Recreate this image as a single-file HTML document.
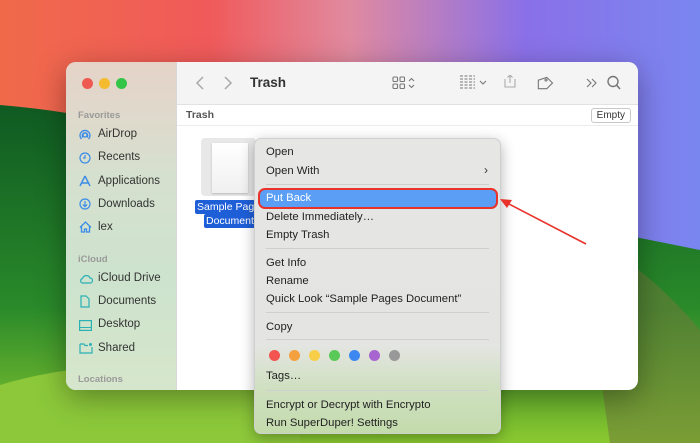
<!DOCTYPE html>
<html><head><style>
*{margin:0;padding:0;box-sizing:border-box}
body{width:700px;height:443px;overflow:hidden;position:relative;font-family:"Liberation Sans",sans-serif;background:#3a8a2a}
.bg{position:absolute;left:0;top:0}
.win{position:absolute;left:66px;top:62px;width:572px;height:328px;border-radius:10px;overflow:hidden;background:#fff;box-shadow:0 8px 30px rgba(0,0,0,.35)}
.side{position:absolute;left:0;top:0;width:111px;height:328px;background:linear-gradient(#e6d3c8 0%,#d6e0cf 35%,#cde3cd 65%,#d6e6cc 100%);border-right:1px solid #d8d8d8}
.tl{position:absolute;top:16px;width:11px;height:11px;border-radius:50%}
.sh{position:absolute;left:12px;font-size:9.5px;color:#9a9a9a;font-weight:bold}
.si{position:absolute;left:32px;font-size:11.5px;color:#333}
.ic{position:absolute;left:13px}
.tb{position:absolute;left:111px;top:0;right:0;height:43px;background:#f4f4f4;border-bottom:1px solid #e2e2e2}
.pb{position:absolute;left:111px;top:43px;right:0;height:21px;background:#fff;border-bottom:1px solid #ececec;font-size:10.5px;color:#555}
.menu{position:absolute;left:254px;top:138px;width:247px;height:296px;border-radius:7px;background:linear-gradient(#e6e6e4 0%,#e4e5e2 70%,#cfe0c0 85%,#c3dbac 100%);box-shadow:0 4px 14px rgba(0,0,0,.3);border:1px solid #cfcfcf}
.mi{position:absolute;left:11px;font-size:11.3px;color:#222}
.sep{position:absolute;left:11px;right:11px;height:1px;background:#cfcfcf}
.dot{position:absolute;top:211px;width:11px;height:11px;border-radius:50%}
</style></head><body>
<svg class="bg" width="700" height="443">
<defs>
<linearGradient id="t" x1="0" y1="0" x2="1" y2="0"><stop offset="0" stop-color="#f06a4a"/><stop offset=".3" stop-color="#f05a5a"/><stop offset=".5" stop-color="#e08aa0"/><stop offset=".75" stop-color="#8a70e8"/><stop offset="1" stop-color="#7a86f0"/></linearGradient>
<linearGradient id="g" x1="0" y1="0" x2="0" y2="1"><stop offset="0" stop-color="#0f5a22"/><stop offset=".6" stop-color="#2a8a2a"/><stop offset="1" stop-color="#8ac830"/></linearGradient>
</defs>
<rect width="700" height="443" fill="url(#t)"/>
<path d="M0 105 Q120 115 200 150 L700 250 L700 443 L0 443Z" fill="url(#g)"/>
<path d="M580 230 Q650 270 700 330 L700 443 L610 443Z" fill="#6f7a3a" opacity=".55"/>
<path d="M0 443 L0 385 Q150 340 300 405 L300 443Z" fill="#8cc83a"/>
</svg>
<div class="win">
 <div class="side">
  <div class="tl" style="left:16px;background:#ee5a52"></div>
  <div class="tl" style="left:33px;background:#f4bb2e"></div>
  <div class="tl" style="left:50px;background:#33c548"></div>
  <div class="sh" style="top:48px">Favorites</div>
  <svg class="ic" style="top:67px" width="12" height="12"><g fill="none" stroke="#3b8ce8" stroke-width="1.3"><circle cx="6" cy="6" r="2"/><path d="M2.5 10A5 5 0 1 1 9.5 10M4 8.5A2.8 2.8 0 1 1 8 8.5"/></g></svg>
  <div class="si" style="top:66px">AirDrop</div>
  <svg class="ic" style="top:90px" width="12" height="12"><circle cx="6" cy="6" r="5" fill="none" stroke="#3b8ce8" stroke-width="1.2"/><path d="M6 3V6H4" fill="none" stroke="#3b8ce8" stroke-width="1.2"/></svg>
  <div class="si" style="top:89px">Recents</div>
  <svg class="ic" style="top:113px" width="12" height="12"><path d="M6 1L11 11M6 1L1 11M2 8H10" fill="none" stroke="#3b8ce8" stroke-width="1.4"/></svg>
  <div class="si" style="top:113px">Applications</div>
  <svg class="ic" style="top:136px" width="12" height="12"><circle cx="6" cy="6" r="5" fill="none" stroke="#3b8ce8" stroke-width="1.2"/><path d="M6 3V8.5M3.8 6.5L6 8.7 8.2 6.5" fill="none" stroke="#3b8ce8" stroke-width="1.2"/></svg>
  <div class="si" style="top:136px">Downloads</div>
  <svg class="ic" style="top:159px" width="13" height="12"><path d="M1 6.5L6.5 1 12 6.5M2.5 5V11H5.5V8H7.5V11H10.5V5" fill="none" stroke="#3b8ce8" stroke-width="1.3"/></svg>
  <div class="si" style="top:159px">lex</div>
  <div class="sh" style="top:192px">iCloud</div>
  <svg class="ic" style="top:211px" width="14" height="11"><path d="M3.5 10H11A2.5 2.5 0 0 0 11 5 4 4 0 0 0 3.5 5.5 2.3 2.3 0 0 0 3.5 10Z" fill="none" stroke="#2ab0b5" stroke-width="1.2"/></svg>
  <div class="si" style="top:210px">iCloud Drive</div>
  <svg class="ic" style="top:233px" width="12" height="13"><path d="M2 1H7L10 4V12H2Z" fill="none" stroke="#2ab0b5" stroke-width="1.2"/></svg>
  <div class="si" style="top:233px">Documents</div>
  <svg class="ic" style="top:258px" width="13" height="11"><rect x=".6" y=".6" width="11.8" height="9.8" fill="none" stroke="#2ab0b5" stroke-width="1.2"/><path d="M1 7.5H12" stroke="#2ab0b5"/></svg>
  <div class="si" style="top:256px">Desktop</div>
  <svg class="ic" style="top:280px" width="14" height="12"><path d="M1 2H5L6 3.5H9M1 2V11H13V5" fill="none" stroke="#2ab0b5" stroke-width="1.2"/><circle cx="11.5" cy="2.5" r="1.5" fill="#2ab0b5"/></svg>
  <div class="si" style="top:280px">Shared</div>
  <div class="sh" style="top:312px">Locations</div>
 </div>
 <div class="tb">
  <svg style="position:absolute;left:18px;top:13px" width="40" height="16"><path d="M8 2L2 8 8 14M30 2L36 8 30 14" fill="none" stroke="#a8a8a8" stroke-width="1.5"/></svg>
  <div style="position:absolute;left:73px;top:13px;font-size:13.5px;font-weight:bold;color:#333">Trash</div>
  <svg style="position:absolute;left:215px;top:13px" width="330" height="18" fill="none" stroke="#777" stroke-width="1.1">
   <rect x="1" y="2" width="4.5" height="4.5" rx="1"/><rect x="8" y="2" width="4.5" height="4.5" rx="1"/><rect x="1" y="9" width="4.5" height="4.5" rx="1"/><rect x="8" y="9" width="4.5" height="4.5" rx="1"/>
   <path d="M17 6L19.5 3.5 22 6M17 10L19.5 12.5 22 10"/>
   <path d="M68 1H83M68 4H83M68 7H83M68 10H83M68 13H83" stroke-dasharray="3 1.5"/>
   <path d="M88 6L91 9 94 6"/>
   <path d="M113 4V12H123V4M118 0V8M115.5 2.5L118 0 120.5 2.5" stroke="#aaa"/>
   <path d="M150 2H158V10L152 16 146 10Z" transform="rotate(45 152 8)"/>
   <circle cx="154" cy="5" r="1"/>
   <path d="M195 4L199 8 195 12M200 4L204 8 200 12"/>
   <circle cx="221" cy="6.5" r="5" stroke-width="1.4"/><path d="M224.5 10L228 14" stroke-width="1.6"/>
  </svg>
 </div>
 <div class="pb"><span style="position:absolute;left:9px;top:4px;font-weight:bold">Trash</span>
  <span style="position:absolute;right:7px;top:3px;border:1px solid #c8c8c8;border-radius:3px;padding:0 5px;font-size:10px;line-height:13px;color:#333">Empty</span></div>
 <div style="position:absolute;left:135px;top:76px;width:55px;height:58px;background:#e8e8e8;border-radius:4px"></div>
 <div style="position:absolute;left:146px;top:81px;width:36px;height:50px;background:linear-gradient(#fff,#f0f0f0);box-shadow:0 1px 2px rgba(0,0,0,.2)"></div>
 <div style="position:absolute;left:129px;top:138px;width:60px;height:14px;background:#1e5fd8;border-radius:2px"></div>
 <div style="position:absolute;left:138px;top:152px;width:52px;height:14px;background:#1e5fd8;border-radius:2px"></div>
 <div style="position:absolute;left:131px;top:139px;font-size:10.5px;color:#fff;white-space:nowrap">Sample Pag</div>
 <div style="position:absolute;left:140px;top:153px;font-size:10.5px;color:#fff;white-space:nowrap">Document</div>
</div>
<div class="menu">
 <div class="mi" style="top:7px">Open</div>
 <div class="mi" style="top:26px">Open With</div>
 <div style="position:absolute;right:12px;top:24px;font-size:12px;color:#333">›</div>
 <div class="sep" style="top:45px"></div>
 <div style="position:absolute;left:3px;top:49px;width:240px;height:21px;border:2px solid #e8322a;border-radius:7px;background:#5a9ef5"></div>
 <div class="mi" style="top:53px;color:#fff">Put Back</div>
 <div class="mi" style="top:72px">Delete Immediately…</div>
 <div class="mi" style="top:90px">Empty Trash</div>
 <div class="sep" style="top:109px"></div>
 <div class="mi" style="top:118px">Get Info</div>
 <div class="mi" style="top:136px">Rename</div>
 <div class="mi" style="top:154px">Quick Look “Sample Pages Document”</div>
 <div class="sep" style="top:173px"></div>
 <div class="mi" style="top:182px">Copy</div>
 <div class="sep" style="top:200px"></div>
 <div class="dot" style="left:14px;background:#f25450"></div>
 <div class="dot" style="left:34px;background:#f5a03f"></div>
 <div class="dot" style="left:54px;background:#f8ce48"></div>
 <div class="dot" style="left:74px;background:#5bc957"></div>
 <div class="dot" style="left:94px;background:#3d88f0"></div>
 <div class="dot" style="left:114px;background:#a865d0"></div>
 <div class="dot" style="left:134px;background:#989898"></div>
 <div class="mi" style="top:231px">Tags…</div>
 <div class="sep" style="top:251px"></div>
 <div class="mi" style="top:260px">Encrypt or Decrypt with Encrypto</div>
 <div class="mi" style="top:278px">Run SuperDuper! Settings</div>
</div>
<svg style="position:absolute;left:0;top:0" width="700" height="443"><path d="M586 244L507 203" stroke="#e8322a" stroke-width="1.6"/><path d="M500 199L512 200 507 208Z" fill="#e8322a"/></svg>
</body></html>
